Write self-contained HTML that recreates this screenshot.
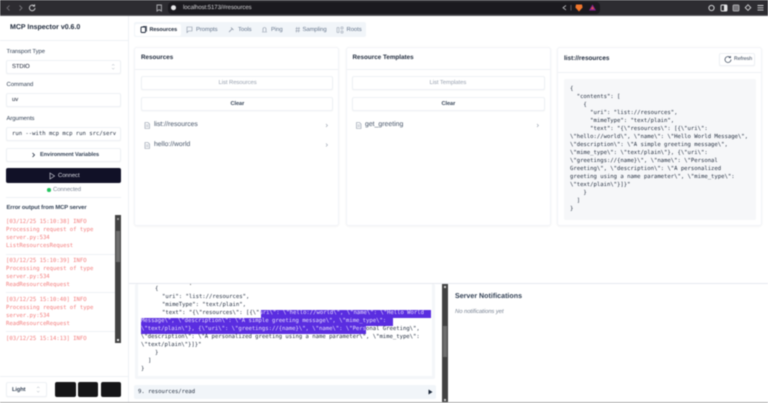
<!DOCTYPE html>
<html><head><meta charset="utf-8"><style>
*{box-sizing:border-box}
html,body{margin:0;padding:0;width:768px;height:403px;overflow:hidden;background:#fff}
#r{position:absolute;left:0;top:0;width:768px;height:403px;overflow:hidden;background:#fff;font-family:"Liberation Sans",sans-serif;color:#0f172a;text-rendering:geometricPrecision;filter:blur(.4px)}
.a{position:absolute}
.t{position:absolute;white-space:pre;line-height:8px;height:8px;font-size:5.9px;letter-spacing:-.06px}
.b{font-weight:700}
.m{font-family:"DejaVu Sans Mono",monospace;font-size:5.58px;letter-spacing:0;color:#1e293b}
.box{position:absolute;background:#fff;border:1px solid #eef1f5;border-radius:2px;box-shadow:0 .5px 1px rgba(0,0,0,.05)}
.card{position:absolute;background:#fff;border:1px solid #f3f4f8;border-radius:3px;box-shadow:0 .5px 2px rgba(0,0,0,.06)}
.line{position:absolute;background:#eef1f5}
.red{font-family:"DejaVu Sans Mono",monospace;font-size:5.58px;letter-spacing:0;color:#f47c7c}
.g{color:#64748b}
.sel{position:absolute;background:#5a2de0}
svg{position:absolute;overflow:visible;fill:none}
</style></head><body><div id="r">

<!-- browser bar -->
<div class="a" style="left:0;top:0;width:768px;height:16px;background:#2d2c31;border-bottom:1px solid #5c5c60"></div>
<div class="a" style="left:168px;top:2px;width:432px;height:12px;background:#1b1a1f;border-radius:4px"></div>
<svg style="left:0;top:0" width="768" height="16">
<path d="M9.5 5.5L7 8l2.5 2.5" stroke="#6d6c71" stroke-width=".9"/>
<path d="M19.5 5.5L22 8l-2.5 2.5" stroke="#77767b" stroke-width=".9"/>
<path d="M35 8a2.8 2.8 0 1 1-1-2.2M34.6 4.4v1.8h-1.8" stroke="#d5d5d8" stroke-width=".9"/>
<path d="M157 5h4.4v6l-2.2-1.4-2.2 1.400z" stroke="#b0b0b4" stroke-width=".9"/>
<circle cx="173.500" cy="7.700" r="2.500" fill="#e8e8ea"/>
<path d="M566 5.500l-3 2.200 3 2.200" stroke="#c5c5c8" stroke-width=".8"/>
<path d="M571 5v5.500" stroke="#77767b" stroke-width=".7"/>
<path d="M576 4.500h6l.6 3-3.600 4-3.600-4z" fill="#f0762c"/>
<path d="M592.500 4.500l3.500 6h-7z" fill="#8a2390"/><path d="M592.500 6.500l1.500 2.500h-3z" fill="#f25c3a"/>
<circle cx="711.500" cy="8" r="2.600" stroke="#d0d0d3" stroke-width="1"/>
<rect x="721" y="5" width="6" height="6" rx="1" stroke="#e4e4e6" stroke-width=".9"/><rect x="724" y="5" width="3" height="6" fill="#e4e4e6"/>
<rect x="733" y="5" width="6" height="6" rx="1" fill="#77767b" stroke="#c5c5c8" stroke-width=".7"/>
<path d="M748 4.800l2.800 2.800-2.800 2.800-2.800-2.800z" stroke="#d5d5d8" stroke-width=".9"/>
<path d="M757.500 5.500h6M757.500 7.800h6M757.500 10.100h6" stroke="#d5d5d8" stroke-width=".9"/>
</svg>
<div class="t" style="left:183px;top:4px;color:#d0d0d3;font-size:6px">localhost:5173/#resources</div>

<!-- sidebar -->
<div class="a" style="left:128px;top:16px;width:1px;height:386px;background:#eef1f5"></div>
<div class="t b" style="left:10px;top:24px;font-size:7px;letter-spacing:0;color:#1e293b">MCP Inspector v0.6.0</div>
<div class="line" style="left:0;top:40px;width:128px;height:1px"></div>
<div class="t" style="left:6.500px;top:48px;color:#334155">Transport Type</div>
<div class="box" style="left:6px;top:60px;width:115px;height:14px"></div>
<div class="t" style="left:12px;top:63px">STDIO</div>
<svg style="left:0;top:0" width="128" height="80"><path d="M112 65.500l1.200-1.200 1.200 1.200M112 68l1.200 1.200 1.200-1.200" stroke="#a0a8b4" stroke-width=".5"/></svg>
<div class="t" style="left:6.500px;top:81px;color:#334155">Command</div>
<div class="box" style="left:6px;top:93px;width:115px;height:14px"></div>
<div class="t" style="left:12px;top:96px">uv</div>
<div class="t" style="left:6.500px;top:115px;color:#334155">Arguments</div>
<div class="box" style="left:6px;top:127px;width:115px;height:14px;overflow:hidden"></div>
<div class="t m" style="left:12px;top:129.500px">run --with mcp mcp run src/serv</div>
<div class="box" style="left:6px;top:148px;width:115px;height:14px"></div>
<svg style="left:0;top:140px" width="128" height="30"><path d="M32.500 13l2 2-2 2" stroke="#1e293b" stroke-width=".8"/></svg>
<div class="t" style="left:40px;top:151px;color:#334155;font-weight:700;font-size:5.600px">Environment Variables</div>
<div class="a" style="left:6px;top:168px;width:115px;height:15px;background:#111127;border-radius:2px"></div>
<svg style="left:0;top:160px" width="128" height="30"><path d="M50 13l4.500 3-4.500 3z" stroke="#c5c6d0" stroke-width=".7"/></svg>
<div class="t" style="left:58px;top:172px;color:#dadbe3">Connect</div>
<div class="a" style="left:47px;top:188px;width:3.500px;height:3.500px;background:#22c55e;border-radius:50%"></div>
<div class="t" style="left:53px;top:186px;color:#7a8494">Connected</div>
<div class="line" style="left:6px;top:197px;width:115px;height:1px"></div>
<div class="t" style="left:6.500px;top:204px;color:#334155;font-weight:700;font-size:5.800px">Error output from MCP server</div>

<div class="t red" style="left:6px;top:218px">[03/12/25 15:10:38] INFO</div>
<div class="t red" style="left:6px;top:226px">Processing request of type</div>
<div class="t red" style="left:6px;top:234px">server.py:534</div>
<div class="t red" style="left:6px;top:242px">ListResourcesRequest</div>
<div class="line" style="left:6px;top:254px;width:109px;height:1px"></div>
<div class="t red" style="left:6px;top:257px">[03/12/25 15:10:39] INFO</div>
<div class="t red" style="left:6px;top:265px">Processing request of type</div>
<div class="t red" style="left:6px;top:273px">server.py:534</div>
<div class="t red" style="left:6px;top:281px">ReadResourceRequest</div>
<div class="line" style="left:6px;top:292px;width:109px;height:1px"></div>
<div class="t red" style="left:6px;top:296px">[03/12/25 15:10:40] INFO</div>
<div class="t red" style="left:6px;top:304px">Processing request of type</div>
<div class="t red" style="left:6px;top:312px">server.py:534</div>
<div class="t red" style="left:6px;top:320px">ReadResourceRequest</div>
<div class="line" style="left:6px;top:331px;width:109px;height:1px"></div>
<div class="t red" style="left:6px;top:335px">[03/12/25 15:14:13] INFO</div>

<div class="a" style="left:115px;top:215px;width:6px;height:128px;background:#424242"></div>
<div class="a" style="left:116px;top:231px;width:4px;height:31px;background:#6e6e6e"></div>
<div class="a" style="left:117px;top:218px;width:2px;height:2px;background:#999"></div>
<div class="a" style="left:117px;top:339px;width:2px;height:2px;background:#eee"></div>

<div class="line" style="left:0;top:376px;width:128px;height:1px"></div>
<div class="box" style="left:6px;top:382px;width:41px;height:15px"></div>
<div class="t" style="left:12px;top:386px;font-weight:700;font-size:5.600px;color:#334155">Light</div>
<svg style="left:0;top:380px" width="128" height="20"><path d="M37 8l1.200-1.200L39.400 8M37 11l1.200 1.200L39.400 11" stroke="#a0a8b4" stroke-width=".5"/></svg>
<div class="a" style="left:55px;top:382px;width:21px;height:15px;background:#151517;border-radius:2px"></div>
<div class="a" style="left:78px;top:382px;width:20px;height:15px;background:#151517;border-radius:2px"></div>
<div class="a" style="left:101px;top:382px;width:20px;height:15px;background:#151517;border-radius:2px"></div>

<!-- tabs -->
<div class="a" style="left:134px;top:22px;width:232px;height:15px;background:#f1f5f9;border-radius:2px"></div>
<div class="a" style="left:135px;top:24px;width:46px;height:12px;background:#fff;border-radius:2px"></div>
<svg style="left:0;top:0" width="370" height="40">
<rect x="141" y="27" width="4.500" height="5.500" rx="1" stroke="#1e293b" stroke-width=".9"/><path d="M143 26.500h3.500v5" stroke="#1e293b" stroke-width=".7"/>
<path d="M187 27h5v4h-3.500L187 32.500z" stroke="#8a94a4" stroke-width=".6"/>
<path d="M229 32l3-3M231 27.500l2.500 2.500" stroke="#8a94a4" stroke-width=".8"/>
<path d="M262 32h5M263 31.500v-2.500a1.500 1.500 0 0 1 3 0v2.500" stroke="#8a94a4" stroke-width=".6"/>
<path d="M295.500 28.500h4.500M295.500 30.800h4.500M296.800 27l-.5 5.500M299 27l-.5 5.500" stroke="#8a94a4" stroke-width=".5"/>
<path d="M337 27.500h2v5h-2zM341 27h2v2h-2zM341 31h2v2h-2z" stroke="#8a94a4" stroke-width=".5"/>
</svg>
<div class="t" style="left:149.500px;top:25.500px;color:#1e293b;font-weight:700;font-size:5.500px">Resources</div>
<div class="t g" style="left:196px;top:25.500px">Prompts</div>
<div class="t g" style="left:238px;top:25.500px">Tools</div>
<div class="t g" style="left:271px;top:25.500px">Ping</div>
<div class="t g" style="left:302.500px;top:25.500px">Sampling</div>
<div class="t g" style="left:346.500px;top:25.500px">Roots</div>

<!-- Resources card -->
<div class="card" style="left:134px;top:47px;width:205px;height:179px"></div>
<div class="line" style="left:135px;top:69px;width:203px;height:1px"></div>
<div class="t b" style="left:141px;top:54px;font-size:6.300px;letter-spacing:0;color:#1e293b">Resources</div>
<div class="box" style="left:141px;top:76px;width:192px;height:14px"></div>
<div class="t" style="left:218.500px;top:79px;color:#9aa3b1">List Resources</div>
<div class="box" style="left:141px;top:97px;width:192px;height:14px"></div>
<div class="t" style="left:230.500px;top:100px;font-weight:700;font-size:5.600px;color:#334155">Clear</div>
<div class="t" style="left:154px;top:121px;font-size:6.800px;letter-spacing:0;color:#475569">list://resources</div>
<div class="t" style="left:154px;top:141px;font-size:6.800px;letter-spacing:0;color:#475569">hello://world</div>

<!-- Templates card -->
<div class="card" style="left:346px;top:47px;width:205px;height:179px"></div>
<div class="line" style="left:347px;top:69px;width:203px;height:1px"></div>
<div class="t b" style="left:352.500px;top:54px;font-size:6.300px;letter-spacing:0;color:#1e293b">Resource Templates</div>
<div class="box" style="left:352px;top:76px;width:193px;height:14px"></div>
<div class="t" style="left:429.500px;top:79px;color:#9aa3b1">List Templates</div>
<div class="box" style="left:352px;top:97px;width:193px;height:14px"></div>
<div class="t" style="left:441.500px;top:100px;font-weight:700;font-size:5.600px;color:#334155">Clear</div>
<div class="t" style="left:365px;top:121px;font-size:6.900px;letter-spacing:0;color:#475569">get_greeting</div>

<svg style="left:0;top:0" width="768" height="160">
<path d="M145 122.500h3l1.500 1.500v4.500H145zM146 125h2.500M146 126.500h2.500" stroke="#8a94a4" stroke-width=".6"/>
<path d="M145 142.500h3l1.500 1.500v4.500H145zM146 145h2.500M146 146.500h2.500" stroke="#8a94a4" stroke-width=".6"/>
<path d="M326 124l1.500 1.500-1.500 1.500" stroke="#9aa3b1" stroke-width=".6"/>
<path d="M326 143.500l1.500 1.500-1.500 1.500" stroke="#9aa3b1" stroke-width=".6"/>
<path d="M356.500 122.500h3l1.500 1.500v4.500h-4.500zM357.500 125h2.500M357.500 126.500h2.500" stroke="#8a94a4" stroke-width=".6"/>
<path d="M537 124l1.500 1.500-1.500 1.500" stroke="#9aa3b1" stroke-width=".6"/>
</svg>

<!-- list card -->
<div class="card" style="left:557px;top:47px;width:205px;height:179px"></div>
<div class="line" style="left:558px;top:72px;width:203px;height:1px"></div>
<div class="t b" style="left:564px;top:55px;font-size:6.400px;letter-spacing:0;color:#1e293b">list://resources</div>
<div class="box" style="left:719px;top:53px;width:36px;height:13px"></div>
<svg style="left:0;top:0" width="768" height="70"><path d="M731 59.500a3 3 0 1 1-.9-2.100M730.500 56v1.700h-1.700" stroke="#334155" stroke-width=".7"/></svg>
<div class="t" style="left:734px;top:55px;font-size:5.200px;letter-spacing:0;color:#334155">Refresh</div>
<div class="a" style="left:564px;top:79px;width:192px;height:141px;background:#f6f7f9;border-radius:2px"></div>
<div class="t m" style="left:570px;top:85px">{</div>
<div class="t m" style="left:570px;top:93px">  "contents": [</div>
<div class="t m" style="left:570px;top:101px">    {</div>
<div class="t m" style="left:570px;top:109px">      "uri": "list://resources",</div>
<div class="t m" style="left:570px;top:117px">      "mimeType": "text/plain",</div>
<div class="t m" style="left:570px;top:125px">      "text": "{\"resources\": [{\"uri\":</div>
<div class="t m" style="left:570px;top:133px">\"hello://world\", \"name\": \"Hello World Message\",</div>
<div class="t m" style="left:570px;top:141px">\"description\": \"A simple greeting message\",</div>
<div class="t m" style="left:570px;top:149px">\"mime_type\": \"text/plain\"}, {\"uri\":</div>
<div class="t m" style="left:570px;top:157px">\"greetings://{name}\", \"name\": \"Personal</div>
<div class="t m" style="left:570px;top:165px">Greeting\", \"description\": \"A personalized</div>
<div class="t m" style="left:570px;top:173px">greeting using a name parameter\", \"mime_type\":</div>
<div class="t m" style="left:570px;top:181px">\"text/plain\"}]}"</div>
<div class="t m" style="left:570px;top:189px">    }</div>
<div class="t m" style="left:570px;top:197px">  ]</div>
<div class="t m" style="left:570px;top:205px">}</div>

<!-- bottom panel -->
<div class="a" style="left:129px;top:283px;width:639px;height:1px;background:#e6e9ef"></div>
<div class="a" style="left:135px;top:284px;width:300px;height:95px;background:#f4f6f9;border-radius:2px"></div>
<div class="a" style="left:138px;top:284px;width:294px;height:92px;background:#fff"></div>
<div class="a" style="left:190px;top:284px;width:1px;height:1px;background:#777"></div>
<div class="sel" style="left:261px;top:310px;width:170px;height:8px"></div>
<div class="sel" style="left:141px;top:318px;width:252px;height:8px"></div>
<div class="sel" style="left:141px;top:326px;width:225px;height:8px"></div>
<div class="t m" style="left:155px;top:285px">{</div>
<div class="t m" style="left:162px;top:293px">"uri": "list://resources",</div>
<div class="t m" style="left:162px;top:301px">"mimeType": "text/plain",</div>
<div class="t m" style="left:162px;top:309px">"text": "{\"resources\": [{\"<span style="color:#e6defc">uri\": \"hello://world\", \"name\": \"Hello World</span></div>
<div class="t m" style="left:141px;top:317px;color:#e6defc">Message\", \"description\": \"A simple greeting message\", \"mime_type\":</div>
<div class="t m" style="left:141px;top:325px"><span style="color:#e6defc">\"text/plain\"}, {\"uri\": \"greetings://{name}\", \"name\": \"Pers</span>onal Greeting\",</div>
<div class="t m" style="left:141px;top:333px">\"description\": \"A personalized greeting using a name parameter\", \"mime_type\":</div>
<div class="t m" style="left:141px;top:341px">\"text/plain\"}]}"</div>
<div class="t m" style="left:155px;top:349px">}</div>
<div class="t m" style="left:148px;top:357px">]</div>
<div class="t m" style="left:141px;top:365px">}</div>
<div class="a" style="left:134px;top:385px;width:302px;height:14px;background:#f1f5f9;border-radius:2px"></div>
<div class="t m" style="left:138px;top:388px">9. resources/read</div>
<svg style="left:0;top:380px" width="440" height="20"><path d="M428.500 9.500l4 2.500-4 2.500z" fill="#1e293b"/></svg>

<div class="a" style="left:442px;top:284px;width:6px;height:118px;background:#424242"></div>
<div class="a" style="left:443px;top:326px;width:4px;height:31px;background:#6e6e6e"></div>
<div class="a" style="left:444px;top:286px;width:2px;height:2px;background:#ccc"></div>
<div class="a" style="left:444px;top:399px;width:2px;height:2px;background:#ccc"></div>

<div class="t b" style="left:455px;top:292px;font-size:7.100px;letter-spacing:0;color:#334155">Server Notifications</div>
<div class="t" style="left:455px;top:308px;font-style:italic;color:#7a8494">No notifications yet</div>

<div class="a" style="left:0;top:402px;width:768px;height:1px;background:#a8a8a8"></div>
</div></body></html>
